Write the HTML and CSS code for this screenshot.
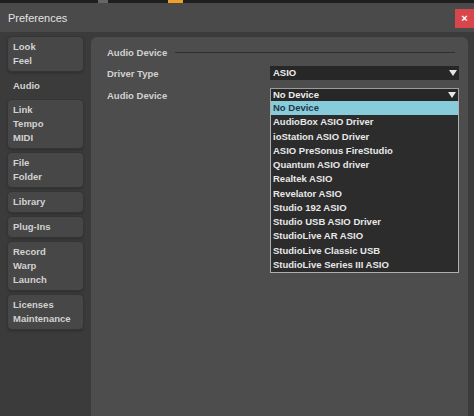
FILE: index.html
```html
<!DOCTYPE html>
<html lang="en">
<head>
  <meta charset="UTF-8" />
  <title>Preferences</title>
  <link rel="stylesheet" href="styles.css">
</head>
<body>

  <!-- Strip of the app behind the dialog -->
  <div class="behind">
    <span class="mark dim"></span>
    <span class="mark orange"></span>
  </div>

  <!-- Title bar -->
  <header class="titlebar">
    <span class="title">Preferences</span>
    <span class="close">&#215;</span>
  </header>

  <div class="window">
    <!-- Tabs -->
    <nav class="sidebar">
      <div class="tab">Look<br>Feel</div>
      <div class="tab selected">Audio</div>
      <div class="tab">Link<br>Tempo<br>MIDI</div>
      <div class="tab">File<br>Folder</div>
      <div class="tab">Library</div>
      <div class="tab">Plug-Ins</div>
      <div class="tab">Record<br>Warp<br>Launch</div>
      <div class="tab">Licenses<br>Maintenance</div>
    </nav>

    <!-- Audio page -->
    <main class="panel">
      <div class="section-head">
        <span>Audio Device</span>
        <span class="rule"></span>
      </div>

      <div class="row first">
        <span class="label">Driver Type</span>
        <div class="select">
          <span>ASIO</span>
          <svg class="arrow" width="8" height="6" viewBox="0 0 8 6"><path d="M0 0 H8 L4 6 Z" fill="#e6e6e6"/></svg>
        </div>
      </div>

      <div class="row">
        <span class="label">Audio Device</span>
        <div class="select open">
          <span>No Device</span>
          <svg class="arrow" width="8" height="6" viewBox="0 0 8 6"><path d="M0 0 H8 L4 6 Z" fill="#e6e6e6"/></svg>
          <ul class="dropdown">
            <li class="active">No Device</li>
            <li>AudioBox ASIO Driver</li>
            <li>ioStation ASIO Driver</li>
            <li>ASIO PreSonus FireStudio</li>
            <li>Quantum ASIO driver</li>
            <li>Realtek ASIO</li>
            <li>Revelator ASIO</li>
            <li>Studio 192 ASIO</li>
            <li>Studio USB ASIO Driver</li>
            <li>StudioLive AR ASIO</li>
            <li>StudioLive Classic USB</li>
            <li>StudioLive Series III ASIO</li>
          </ul>
        </div>
      </div>
    </main>
  </div>

</body>
</html>
```

FILE: styles.css
```css
/* Base */
* {
  margin: 0;
  padding: 0;
  box-sizing: border-box;
}

body {
  background-color: #3b3b3b;
  font-family: "Liberation Sans", Arial, sans-serif;
  font-weight: bold;
  font-size: 9.5px;
  color: #d2d2d2;
  height: 416px;
  overflow: hidden;
  display: flex;
  flex-direction: column;
}

/* Strip behind the dialog */
.behind {
  height: 3px;
  background-color: #1f1f1f;
  display: flex;
}

.mark {
  height: 3px;
}

.mark.dim {
  width: 10px;
  margin-left: 98px;
  background-color: #666;
}

.mark.orange {
  width: 15px;
  margin-left: 60px;
  background-color: #f0a02a;
}

/* Title bar */
.titlebar {
  height: 29px;
  background-color: #4a4a4a;
  display: flex;
  align-items: center;
  justify-content: space-between;
  padding-left: 8px;
}

.title {
  font-size: 11px;
  font-weight: normal;
  color: #e2e2e2;
}

.close {
  width: 19px;
  height: 19px;
  margin-top: 2px;
  background-color: #d6464c;
  color: #fff;
  font-size: 11px;
  line-height: 19px;
  text-align: center;
}

/* Layout */
.window {
  flex: 1;
  display: flex;
}

.sidebar {
  width: 91px;
  padding: 5px 8px 0 8px;
  display: flex;
  flex-direction: column;
  gap: 5px;
}

.tab {
  background-color: #474747;
  border-radius: 4px;
  box-shadow: 0 0 0 1px #353535, 0 2px 3px #2e2e2e;
  padding: 3px 5px;
  line-height: 14px;
}

.tab.selected {
  background-color: transparent;
  box-shadow: none;
  margin-bottom: -1px;
}

/* Main panel */
.panel {
  flex: 1;
  margin: 5px 6px 0 0;
  background-color: #4d4d4d;
  border-radius: 6px 6px 0 0;
  padding: 8px 9px 0 16px;
}

.section-head {
  display: flex;
  align-items: center;
  gap: 8px;
  height: 14px;
}

.rule {
  flex: 1;
  height: 1px;
  margin-right: 4px;
  background-color: #2f2f2f;
}

.row {
  display: flex;
  align-items: center;
  margin-top: 8px;
}

.row.first {
  margin-top: 7px;
}

.label {
  width: 163px;
}

.select {
  position: relative;
  width: 189px;
  height: 14px;
  background-color: #272727;
  color: #ececec;
  padding-left: 3px;
  line-height: 14px;
  display: flex;
  justify-content: space-between;
  align-items: center;
}

.select.open {
  border: 1px solid #9c9c9c;
  padding-left: 2px;
}

.arrow {
  margin-right: 2px;
}

/* Open list */
.dropdown {
  position: absolute;
  top: 100%;
  left: -1px;
  right: -1px;
  list-style: none;
  background-color: #2c2c2c;
  border: 1px solid #b0b0b0;
  border-top: none;
}

.dropdown li {
  height: 14.25px;
  line-height: 14.25px;
  padding-left: 2px;
  color: #e8e8e8;
}

.dropdown li.active {
  background-color: #88cbdb;
  color: #1d3a47;
}
```
